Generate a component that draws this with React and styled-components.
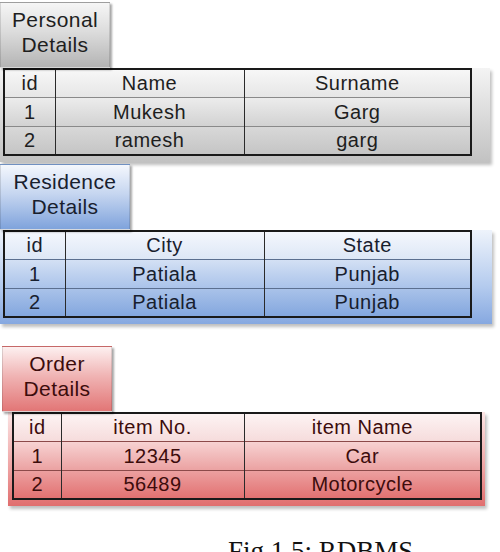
import React from 'react';
import styled, { createGlobalStyle } from 'styled-components';

const GlobalStyle = createGlobalStyle`
  html, body {
    margin: 0;
    padding: 0;
    background: #fff;
  }
  body {
    font-family: "Liberation Sans", Arial, sans-serif;
  }
`;

const themes = {
  gray: {
    text: '#1e1e1e',
    label: 'linear-gradient(#f6f6f6, #dcdcdc 45%, #b4b4b4)',
    panel: 'linear-gradient(#f4f4f4, #d6d6d6 60%, #c2c2c2)',
    rows: [
      'linear-gradient(#f7f7f7, #e6e6e6)',
      'linear-gradient(#ececec, #d2d2d2)',
      'linear-gradient(#d8d8d8, #c4c4c4)'
    ],
    line: '#8a8a8a'
  },
  blue: {
    text: '#18202e',
    label: 'linear-gradient(#f4f7fd, #c6d6f0 45%, #7fa3dc)',
    panel: 'linear-gradient(#eef3fb, #b4cbee 60%, #86a8e0)',
    rows: [
      'linear-gradient(#f4f7fd, #dde7f6)',
      'linear-gradient(#d3e0f4, #aac3ea)',
      'linear-gradient(#a9c2e9, #82a6de)'
    ],
    line: '#5b6f90'
  },
  red: {
    text: '#3c0c0c',
    label: 'linear-gradient(#fdf0f0, #f0b4b4 45%, #e27676)',
    panel: 'linear-gradient(#fbe4e4, #eea2a2 60%, #e06e6e)',
    rows: [
      'linear-gradient(#fdf3f3, #f6dcdc)',
      'linear-gradient(#f7d2d2, #eba2a2)',
      'linear-gradient(#eca0a0, #e27070)'
    ],
    line: '#8c4a4a'
  }
};

const Page = styled.div`
  width: 500px;
  height: 552px;
  overflow: hidden;
  display: flex;
  flex-direction: column;
`;

const Section = styled.section`
  display: flex;
  flex-direction: column;
  align-items: flex-start;
  margin-top: ${(p) => p.$top}px;
  padding-left: ${(p) => p.$indent}px;
`;

const Label = styled.div`
  position: relative;
  z-index: 2;
  width: ${(p) => p.$width}px;
  height: 66px;
  box-sizing: border-box;
  margin-left: ${(p) => p.$shift}px;
  padding-top: 4px;
  background: ${(p) => p.$theme.label};
  color: ${(p) => p.$theme.text};
  font-size: 21px;
  line-height: 25px;
  letter-spacing: 0.4px;
  text-align: center;
  border: 1px solid rgba(0, 0, 0, 0.12);
  box-shadow: 2px 2px 2px rgba(0, 0, 0, 0.35);
`;

const Panel = styled.div`
  width: ${(p) => p.$width}px;
  box-sizing: border-box;
  padding: 0 20px 6px ${(p) => p.$padLeft}px;
  background: ${(p) => p.$theme.panel};
  box-shadow: 2px 3px 3px rgba(0, 0, 0, 0.25);
`;

const Table = styled.table`
  width: 100%;
  border-collapse: collapse;
  border: 2px solid #1a1a1a;
  table-layout: fixed;
  color: ${(p) => p.$theme.text};
  font-size: 20px;
  letter-spacing: 0.5px;
`;

const Row = styled.tr`
  height: ${(p) => (p.$index === 0 ? 28 : 29)}px;
  background: ${(p) => p.$theme.rows[p.$index]};
  border-top: 1px solid ${(p) => p.$theme.line};
`;

const Cell = styled.td`
  padding: 0;
  text-align: center;
  line-height: 24px;
  border-left: 1px solid #2a2a2a;
`;

const Caption = styled.div`
  margin-top: 30px;
  padding-left: 228px;
  font-family: "Liberation Serif", "Times New Roman", serif;
  font-size: 27px;
  line-height: 30px;
  color: #111;
  white-space: nowrap;
`;

const sections = [
  {
    theme: 'gray',
    title: ['Personal', 'Details'],
    top: 2,
    indent: 0,
    labelWidth: 110,
    labelShift: 0,
    panelWidth: 490,
    padLeft: 3,
    cols: [51, 189, 227],
    rows: [
      ['id', 'Name', 'Surname'],
      ['1', 'Mukesh', 'Garg'],
      ['2', 'ramesh', 'garg']
    ]
  },
  {
    theme: 'blue',
    title: ['Residence', 'Details'],
    top: 2,
    indent: 0,
    labelWidth: 130,
    labelShift: 0,
    panelWidth: 492,
    padLeft: 3,
    cols: [61, 199, 207],
    rows: [
      ['id', 'City', 'State'],
      ['1', 'Patiala', 'Punjab'],
      ['2', 'Patiala', 'Punjab']
    ]
  },
  {
    theme: 'red',
    title: ['Order', 'Details'],
    top: 22,
    indent: 8,
    labelWidth: 110,
    labelShift: -6,
    panelWidth: 477,
    padLeft: 4,
    cols: [48, 183, 237],
    rows: [
      ['id', 'item No.', 'item Name'],
      ['1', '12345', 'Car'],
      ['2', '56489', 'Motorcycle']
    ]
  }
];

function DetailTable({ section }) {
  const theme = themes[section.theme];
  return (
    <Section $top={section.top} $indent={section.indent}>
      <Label $theme={theme} $width={section.labelWidth} $shift={section.labelShift}>
        {section.title[0]}
        <br />
        {section.title[1]}
      </Label>
      <Panel $theme={theme} $width={section.panelWidth} $padLeft={section.padLeft}>
        <Table $theme={theme}>
          <colgroup>
            {section.cols.map((w, i) => (
              <col key={i} style={{ width: w }} />
            ))}
          </colgroup>
          <tbody>
            {section.rows.map((row, r) => (
              <Row key={r} $theme={theme} $index={r}>
                {row.map((text, c) => (
                  <Cell key={c}>{text}</Cell>
                ))}
              </Row>
            ))}
          </tbody>
        </Table>
      </Panel>
    </Section>
  );
}

export default function App() {
  return (
    <Page>
      <GlobalStyle />
      {sections.map((s) => (
        <DetailTable key={s.theme} section={s} />
      ))}
      <Caption>Fig 1.5: RDBMS</Caption>
    </Page>
  );
}
